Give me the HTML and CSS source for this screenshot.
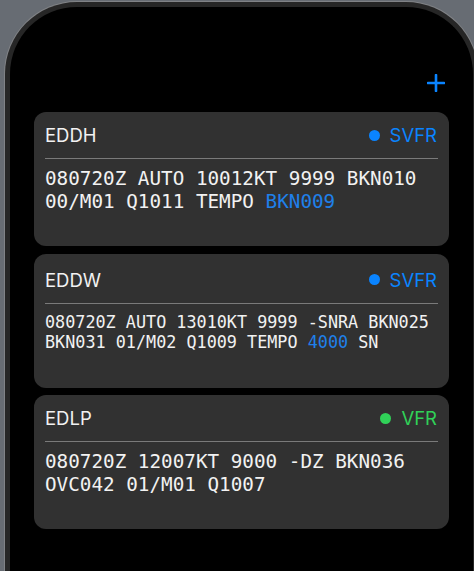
FILE: index.html
```html
<!DOCTYPE html>
<html lang="en">
<head>
    <meta charset="UTF-8">
    <title>METAR</title>
    <link rel="stylesheet" href="styles.css">
</head>
<body>

    <div class="phone">
        <div class="toolbar">
            <svg class="addButton" width="18" height="18" viewBox="0 0 18 18">
                <path d="M9 1 V17 M1 9 H17" stroke="#0a84ff" stroke-width="2.6" stroke-linecap="round"/>
            </svg>
        </div>

        <div class="stationList">
            <div class="stationCard">
                <div class="cardHeader">
                    <span class="stationName">EDDH</span>
                    <span class="flightRule svfr"><span class="ruleDot"></span>SVFR</span>
                </div>
                <div class="divider"></div>
                <p class="metar"><span>080720Z AUTO 10012KT 9999 BKN010</span> <span>00/M01 Q1011 TEMPO</span> <span class="highlight">BKN009</span></p>
            </div>

            <div class="stationCard">
                <div class="cardHeader">
                    <span class="stationName">EDDW</span>
                    <span class="flightRule svfr"><span class="ruleDot"></span>SVFR</span>
                </div>
                <div class="divider"></div>
                <p class="metar small"><span>080720Z AUTO 13010KT 9999 -SNRA BKN025</span> <span>BKN031 01/M02 Q1009 TEMPO</span> <span class="highlight">4000</span> <span>SN</span></p>
            </div>

            <div class="stationCard">
                <div class="cardHeader">
                    <span class="stationName">EDLP</span>
                    <span class="flightRule vfr"><span class="ruleDot"></span>VFR</span>
                </div>
                <div class="divider"></div>
                <p class="metar"><span>080720Z 12007KT 9000 -DZ BKN036</span> <span>OVC042 01/M01 Q1007</span></p>
            </div>
        </div>
    </div>

</body>
</html>
```

FILE: styles.css
```css
html, body {
    margin: 0;
    padding: 0;
}

body {
    width: 474px;
    height: 571px;
    overflow: hidden;
    background: #676c73;
    font-family: Inter, "Liberation Sans", sans-serif;
}

p {
    margin: 0;
}

.phone {
    box-sizing: border-box;
    width: 473px;
    height: 569px;
    margin: 2px 0 0 5px;
    border: 5px solid #262626;
    border-bottom: none;
    border-radius: 72px 72px 0 0;
    background: #000;
    box-shadow: 0 0 0 1px rgba(150, 150, 150, 0.55);
}

.toolbar {
    display: flex;
    justify-content: flex-end;
    padding: 67px 28px 20px 0;
}

.addButton {
    display: block;
}

.stationList {
    display: flex;
    flex-direction: column;
    gap: 7.5px;
    padding: 0 24px 0 24px;
}

.stationCard {
    box-sizing: border-box;
    height: 134px;
    padding: 0 11px 21px 11px;
    display: flex;
    flex-direction: column;
    justify-content: center;
    background: #313131;
    border-radius: 12px;
}

.cardHeader {
    display: flex;
    justify-content: space-between;
    align-items: center;
    height: 22px;
    font-size: 18.5px;
    line-height: 22px;
}

.stationName {
    color: #f2f2f2;
}

.flightRule {
    display: flex;
    align-items: center;
    gap: 10px;
    padding-right: 1px;
}

.ruleDot {
    width: 11px;
    height: 11px;
    border-radius: 50%;
    background: currentColor;
}

.svfr {
    color: #0a84ff;
}

.vfr {
    color: #30d158;
}

.divider {
    height: 1px;
    margin: 12px 0 8px 0;
    background: #7a7a7a;
}

.metar {
    color: #f2f2f2;
    font-family: "DejaVu Sans Mono", "Liberation Mono", monospace;
    font-size: 19.3px;
    line-height: 23px;
}

.metar.small {
    font-size: 16.8px;
    line-height: 20px;
}

.highlight {
    color: #1f80ea;
}
```
